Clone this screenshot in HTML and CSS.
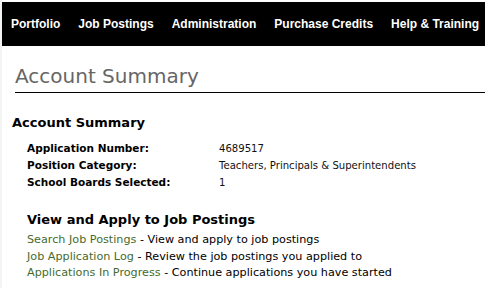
FILE: index.html
```html
<!DOCTYPE html>
<html>
<head>
<meta charset="utf-8">
<link rel="stylesheet" href="styles.css">
</head>
<body>
<div class="page">
  <nav class="topnav">
    <a href="#">Portfolio</a>
    <a href="#">Job Postings</a>
    <a href="#">Administration</a>
    <a href="#">Purchase Credits</a>
    <a href="#">Help &amp; Training</a>
  </nav>
  <h1 class="title">Account Summary</h1>
  <section class="summary">
    <h2 class="section-head">Account Summary</h2>
    <div class="details">
      <div class="label">Application Number:</div><div class="value">4689517</div>
      <div class="label">Position Category:</div><div class="value">Teachers, Principals &amp; Superintendents</div>
      <div class="label">School Boards Selected:</div><div class="value">1</div>
    </div>
    <h3 class="sub-head">View and Apply to Job Postings</h3>
    <ul class="links">
      <li><a href="#">Search Job Postings</a> - View and apply to job postings</li>
      <li><a href="#">Job Application Log</a> - Review the job postings you applied to</li>
      <li><a href="#">Applications In Progress</a> - Continue applications you have started</li>
    </ul>
  </section>
</div>
</body>
</html>
```

FILE: styles.css
```css
html, body {
  margin: 0;
  padding: 0;
  background: #f4f4f4;
}
body {
  font-family: "DejaVu Sans", Verdana, sans-serif;
  color: #000;
}
.page {
  margin-left: 2px;
  padding-top: 2px;
  background: #fff;
  min-height: 288px;
}
.topnav {
  display: flex;
  height: 44px;
  align-items: center;
  background: #000;
}
.topnav a {
  font-family: "Liberation Sans", Arial, sans-serif;
  font-weight: bold;
  font-size: 12px;
  color: #fff;
  text-decoration: none;
  padding: 0 9px;
  white-space: nowrap;
}
.title {
  margin: 0 0 0 13px;
  padding-top: 16px;
  padding-bottom: 2px;
  font-size: 20px;
  font-weight: normal;
  line-height: 28px;
  color: #666;
  border-bottom: 1px solid #000;
}
.summary {
  padding-left: 10px;
}
.section-head {
  margin: 20px 0 0 0;
  font-size: 13px;
  line-height: 20px;
  font-weight: bold;
}
.details {
  display: grid;
  grid-template-columns: 192px auto;
  margin: 7px 0 0 15px;
  line-height: 17px;
}
.label {
  font-weight: bold;
  font-size: 10.5px;
}
.value {
  font-size: 10.1px;
  color: #111;
}
.sub-head {
  margin: 19px 0 0 15px;
  font-size: 13px;
  line-height: 20px;
  font-weight: bold;
}
.links {
  list-style: none;
  margin: 2px 0 0 15px;
  padding: 0;
  font-size: 11.2px;
  line-height: 16.5px;
}
.links a {
  color: #466b2c;
  text-decoration: none;
}
```
